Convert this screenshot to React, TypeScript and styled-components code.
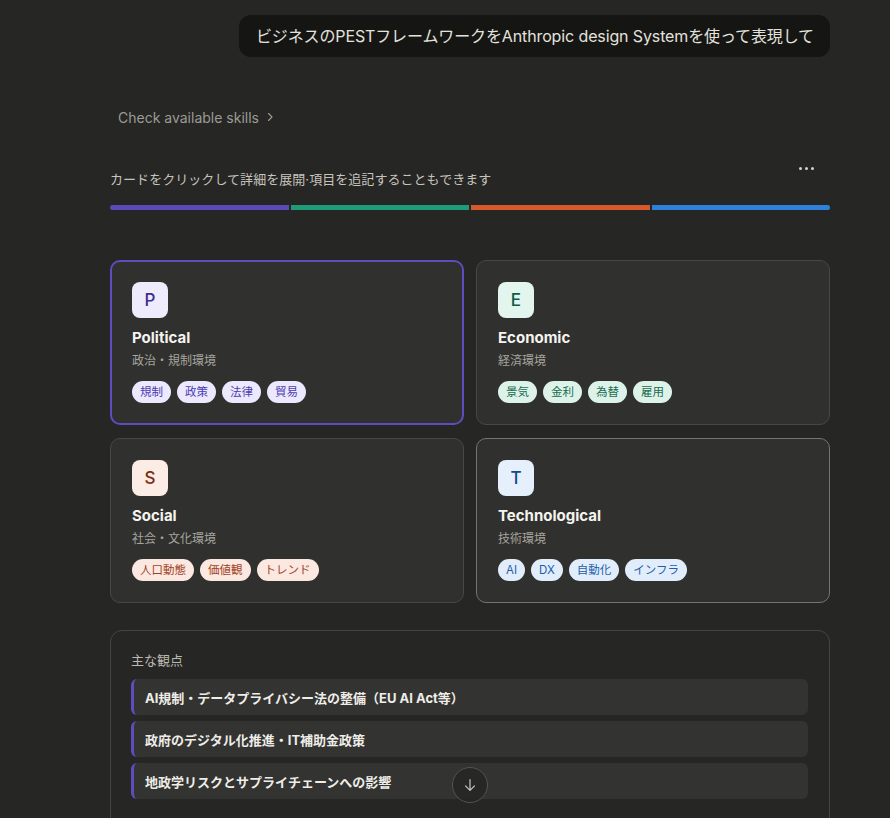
import React from "react";
import styled, { createGlobalStyle } from "styled-components";

const Global = createGlobalStyle`
  html, body { margin: 0; padding: 0; background: #262624; }
  body { font-family: Inter, "Noto Sans CJK JP", sans-serif; color: #e8e6e0; }
  * { box-sizing: border-box; }
`;

const Page = styled.div`
  width: 890px;
  height: 818px;
  overflow: hidden;
  padding: 15px 60px 0 110px;
  position: relative;
`;

const UserRow = styled.div`
  display: flex;
  justify-content: flex-end;
`;

const Bubble = styled.div`
  background: #151514;
  border-radius: 12px;
  height: 42px;
  line-height: 42px;
  padding: 0 16px 0 17px;
  font-size: 16px;
  color: #e4e2dc;
  letter-spacing: -0.12px;
`;

const Skills = styled.div`
  margin: 42px 0 0 8px;
  display: flex;
  align-items: center;
  gap: 6px;
  font-size: 14px;
  color: #9d9b94;
  height: 36px;
`;

const HeaderRow = styled.div`
  margin-top: 20px;
  display: flex;
  justify-content: space-between;
  align-items: flex-start;
`;

const Hint = styled.div`
  font-size: 13px;
  color: #c6c4bc;
  margin-top: 14px;
  letter-spacing: 0.05px;
`;

const Dots = styled.div`
  display: flex;
  gap: 3px;
  margin-right: 16px;
  margin-top: 12px;
  span {
    width: 3px;
    height: 3px;
    border-radius: 50%;
    background: #d4d2cc;
  }
`;

const Bar = styled.div`
  margin-top: 17px;
  display: flex;
  gap: 2px;
  height: 5px;
`;

const Seg = styled.div<{ $c: string; $first?: boolean; $last?: boolean }>`
  flex: 1;
  background: ${(p) => p.$c};
  border-radius: ${(p) => (p.$first ? "3px 0 0 3px" : p.$last ? "0 3px 3px 0" : "0")};
`;

const Grid = styled.div`
  margin-top: 50px;
  display: grid;
  grid-template-columns: 1fr 1fr;
  gap: 13px 12px;
`;

const Card = styled.div<{ $border: string; $w: number }>`
  height: 165px;
  border-radius: 10px;
  background: #30302e;
  border: ${(p) => p.$w}px solid ${(p) => p.$border};
  padding: ${(p) => 22 - p.$w}px ${(p) => 22 - p.$w}px 0;
  display: flex;
  flex-direction: column;
`;

const Letter = styled.div<{ $bg: string; $fg: string }>`
  width: 36px;
  height: 36px;
  border-radius: 8px;
  background: ${(p) => p.$bg};
  color: ${(p) => p.$fg};
  display: flex;
  align-items: center;
  justify-content: center;
  font-size: 17px;
  font-weight: 500;
`;

const Title = styled.div`
  margin-top: 10px;
  font-size: 15px;
  font-weight: 700;
  color: #f5f4ef;
  line-height: 20px;
`;

const Sub = styled.div`
  margin-top: 5px;
  font-size: 12px;
  color: #a6a49d;
  line-height: 16px;
`;

const Tags = styled.div`
  margin-top: 12px;
  display: flex;
  gap: 6px;
`;

const Tag = styled.span<{ $bg: string; $fg: string }>`
  height: 22px;
  line-height: 22px;
  padding: 0 8px;
  border-radius: 11px;
  font-size: 11.5px;
  background: ${(p) => p.$bg};
  color: ${(p) => p.$fg};
`;

const Panel = styled.div`
  margin-top: 27px;
  border: 1px solid #464541;
  border-radius: 12px;
  padding: 20px 21px 20px 20px;
  height: 240px;
`;

const PanelTitle = styled.div`
  font-size: 13px;
  color: #bbb9b2;
  line-height: 18px;
`;

const Items = styled.div`
  margin-top: 10px;
  display: flex;
  flex-direction: column;
  gap: 6px;
`;

const Item = styled.div<{ $c: string }>`
  height: 36px;
  background: #333331;
  border-left: 3px solid ${(p) => p.$c};
  border-radius: 6px;
  padding-left: 11px;
  display: flex;
  align-items: center;
  font-size: 13px;
  font-weight: 700;
  color: #efede8;
`;

const ScrollBtn = styled.div`
  position: absolute;
  left: 452px;
  top: 767px;
  width: 36px;
  height: 36px;
  border-radius: 50%;
  border: 1px solid #55544f;
  background: rgba(38, 38, 36, 0.85);
  display: flex;
  align-items: center;
  justify-content: center;
`;

const cards = [
  {
    l: "P", t: "Political", s: "政治・規制環境", tags: ["規制", "政策", "法律", "貿易"],
    bg: "#eeebfd", fg: "#3b2f8e", tbg: "#ece8fd", tfg: "#4b3cae", border: "#5d4dbd", w: 2,
  },
  {
    l: "E", t: "Economic", s: "経済環境", tags: ["景気", "金利", "為替", "雇用"],
    bg: "#e2f5ee", fg: "#0f5c44", tbg: "#ddf3ea", tfg: "#1b6c51", border: "#484744", w: 1,
  },
  {
    l: "S", t: "Social", s: "社会・文化環境", tags: ["人口動態", "価値観", "トレンド"],
    bg: "#fbece6", fg: "#7b2e14", tbg: "#fbe8e1", tfg: "#a1431f", border: "#484744", w: 1,
  },
  {
    l: "T", t: "Technological", s: "技術環境", tags: ["AI", "DX", "自動化", "インフラ"],
    bg: "#e5f0fc", fg: "#0f4a8b", tbg: "#e2edfb", tfg: "#1c5ea8", border: "#75746f", w: 1,
  },
];

const points = [
  "AI規制・データプライバシー法の整備（EU AI Act等）",
  "政府のデジタル化推進・IT補助金政策",
  "地政学リスクとサプライチェーンへの影響",
];

export default function App() {
  return (
    <>
      <Global />
      <Page>
        <UserRow>
          <Bubble>ビジネスのPESTフレームワークをAnthropic design Systemを使って表現して</Bubble>
        </UserRow>
        <Skills>
          Check available skills
          <svg width="10" height="10" viewBox="0 0 10 10" fill="none">
            <path d="M3.5 1.5 L7 5 L3.5 8.5" stroke="#9d9b94" strokeWidth="1.1" strokeLinecap="round" strokeLinejoin="round" />
          </svg>
        </Skills>
        <HeaderRow>
          <Hint>カードをクリックして詳細を展開·項目を追記することもできます</Hint>
          <Dots>
            <span />
            <span />
            <span />
          </Dots>
        </HeaderRow>
        <Bar>
          <Seg $c="#5a49b6" $first />
          <Seg $c="#1f9c77" />
          <Seg $c="#d6582b" />
          <Seg $c="#2f80d9" $last />
        </Bar>
        <Grid>
          {cards.map((c) => (
            <Card key={c.l} $border={c.border} $w={c.w}>
              <Letter $bg={c.bg} $fg={c.fg}>{c.l}</Letter>
              <Title>{c.t}</Title>
              <Sub>{c.s}</Sub>
              <Tags>
                {c.tags.map((t) => (
                  <Tag key={t} $bg={c.tbg} $fg={c.tfg}>{t}</Tag>
                ))}
              </Tags>
            </Card>
          ))}
        </Grid>
        <Panel>
          <PanelTitle>主な観点</PanelTitle>
          <Items>
            {points.map((p) => (
              <Item key={p} $c="#5d4dbd">{p}</Item>
            ))}
          </Items>
        </Panel>
        <ScrollBtn>
          <svg width="16" height="16" viewBox="0 0 16 16" fill="none">
            <path d="M8 2.5 V13 M3.5 8.8 L8 13.3 L12.5 8.8" stroke="#c9c7c0" strokeWidth="1.2" strokeLinecap="round" strokeLinejoin="round" />
          </svg>
        </ScrollBtn>
      </Page>
    </>
  );
}
